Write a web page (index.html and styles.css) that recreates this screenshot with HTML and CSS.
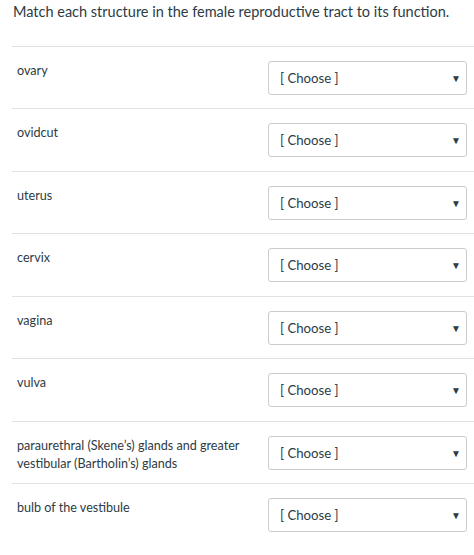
FILE: index.html
```html
<!DOCTYPE html>
<html>
<head>
<meta charset="utf-8">
<link rel="stylesheet" href="styles.css">
</head>
<body>
<div class="quiz">
  <p class="question">Match each structure in the female reproductive tract to its function.</p>
  <div class="answers">
    <div class="row"><div class="label">ovary</div><div class="select"><span>[ Choose ]</span><span class="arrow">&#9660;</span></div></div>
    <div class="row"><div class="label">ovidcut</div><div class="select"><span>[ Choose ]</span><span class="arrow">&#9660;</span></div></div>
    <div class="row"><div class="label">uterus</div><div class="select"><span>[ Choose ]</span><span class="arrow">&#9660;</span></div></div>
    <div class="row"><div class="label">cervix</div><div class="select"><span>[ Choose ]</span><span class="arrow">&#9660;</span></div></div>
    <div class="row"><div class="label">vagina</div><div class="select"><span>[ Choose ]</span><span class="arrow">&#9660;</span></div></div>
    <div class="row"><div class="label">vulva</div><div class="select"><span>[ Choose ]</span><span class="arrow">&#9660;</span></div></div>
    <div class="row"><div class="label">paraurethral (Skene’s) glands and greater vestibular (Bartholin’s) glands</div><div class="select"><span>[ Choose ]</span><span class="arrow">&#9660;</span></div></div>
    <div class="row"><div class="label">bulb of the vestibule</div><div class="select"><span>[ Choose ]</span><span class="arrow">&#9660;</span></div></div>
  </div>
</div>
</body>
</html>
```

FILE: styles.css
```css
html, body {
  margin: 0;
  padding: 0;
  background: #ffffff;
}
body {
  font-family: Lato, "Liberation Sans", sans-serif;
  color: #2d3b45;
}
.quiz {
  padding: 0 0 0 12px;
}
.question {
  margin: 0;
  padding: 1px 0 0 1px;
  font-size: 14.5px;
  line-height: 22px;
  height: 45px;
}
.row {
  border-top: 1px solid #dfe3e6;
  display: flex;
  justify-content: space-between;
  padding: 14px 7px 14px 5px;
  height: 33.43px;
}
.label {
  font-size: 12.6px;
  line-height: 18px;
  padding-top: 1px;
  width: 235px;
}
.select {
  box-sizing: border-box;
  width: 199px;
  height: 34px;
  border: 1px solid #c7cdd1;
  border-radius: 3px;
  display: flex;
  align-items: center;
  justify-content: space-between;
  padding: 0 5px 0 11px;
  font-size: 13.2px;
}
.arrow {
  font-size: 10px;
  color: #2d3b45;
}
```
